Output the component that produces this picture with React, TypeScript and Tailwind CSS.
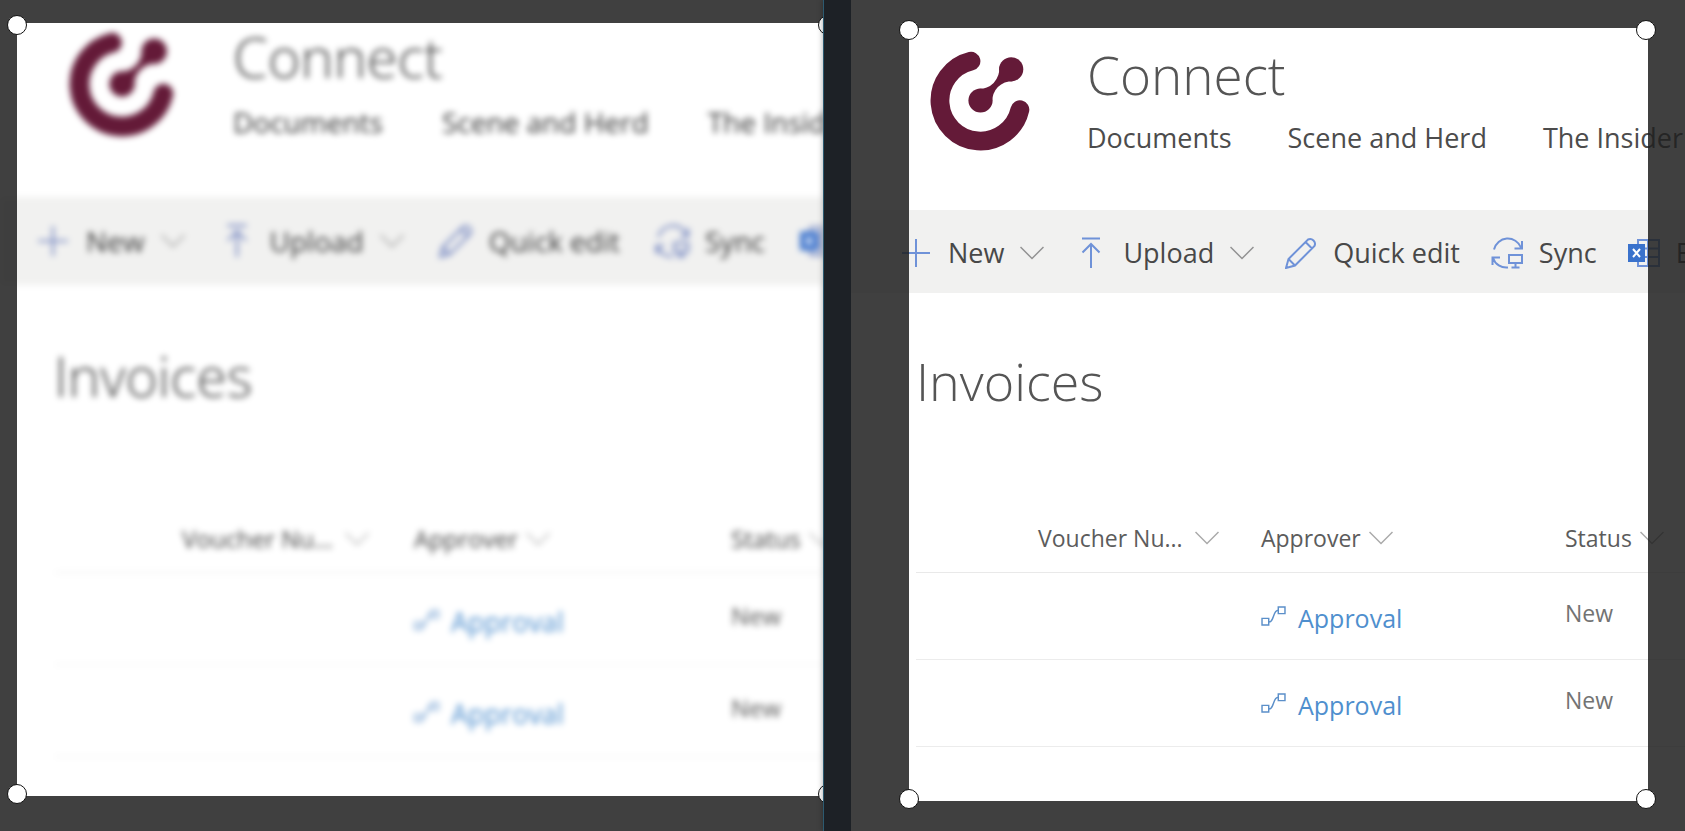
import type { ReactNode } from "react";
import clsx from "clsx";

type Size = "large" | "small";

// The two panes show the same page at slightly different zoom levels.
const sizes = {
    large: {
        page: "blur-[3px]",
        header: "h-[197px] pt-[24px] pl-[69px] gap-[58px]",
        logo: "w-[106px] h-[106px] mt-[7px]",
        title: "text-[56px] text-[#444]",
        nav: "mt-[16px] gap-[59px] text-[28px] text-[#333]",
        bar: "h-[88px] pl-[36px] gap-[35px] text-[28px] text-[#383838]",
        icon: "w-[34px] h-[34px] text-[#6c7fbd]",
        heading: "mt-[59px] ml-[54px] text-[55px] text-[#444]",
        table: "mt-[99px] ml-[55px]",
        cols: ["w-[127px]", "w-[232px]", "w-[317px]"],
        headRow: "h-[65px] text-[24px] text-[#444]",
        row: "h-[92px]",
        approval: "pt-[33px] text-[27px]",
        status: "pt-[27px] text-[24px] text-[#555]",
    },
    small: {
        page: "",
        header: "h-[210px] pt-[43px] pl-[79px] gap-[56px]",
        logo: "w-[101px] h-[101px] mt-[7px]",
        title: "text-[53px] text-[#555]",
        nav: "mt-[13px] gap-[56px] text-[27px] text-[#4c4c4c]",
        bar: "h-[83px] pt-[3px] pl-[49px] gap-[31px] text-[27px] text-[#484848]",
        icon: "w-[32px] h-[32px] text-[#6f92d8]",
        heading: "mt-[56px] ml-[65px] text-[52px] text-[#555]",
        table: "mt-[92px] ml-[65px]",
        cols: ["w-[122px]", "w-[223px]", "w-[304px]"],
        headRow: "h-[67px] text-[23px] text-[#5c5c5c]",
        row: "h-[87px]",
        approval: "pt-[29px] text-[25px]",
        status: "pt-[24px] text-[23px] text-[#737373]",
    },
};

const links = ["Documents", "Scene and Herd", "The Insider"];

const commands: { label: string; menu?: boolean; icon: ReactNode }[] = [
    { label: "New", menu: true, icon: <path d="M16 2v28M2 16h28" /> },
    { label: "Upload", menu: true, icon: <path d="M7 1.500h18M16 31V7M7.500 15.500L16 7l8.500 8.500" /> },
    {
        label: "Quick edit",
        icon: <path d="M1 31l2.500-9L23 2.500a4.900 4.900 0 0 1 6.500 6.500L10 28.500zM20.500 5l6.500 6.500M3.500 22l6.500 6.500" />,
    },
    {
        label: "Sync",
        icon: (
            <>
                <path d="M3 12.500A14.200 14.200 0 0 1 30 10.500M31 4v7.500h-7.500M1.500 28v-7.500h7.500M2 21A14 14 0 0 0 17 30.500" />
                <path d="M18 18h13v8H18zM24.500 26v4M20.500 30.500h8" />
            </>
        ),
    },
    {
        label: "Export to Excel",
        icon: (
            <>
                <path d="M10 8V3h21v26H10v-5M20 3v26M10 11.500h21M10 20h21" />
                <path d="M1 8h15v16H1z" fill="#3a72cc" stroke="#3a72cc" />
                <path d="M5 12l7 8M12 12l-7 8" stroke="#fff" />
            </>
        ),
    },
];

function Logo({ className }: { className: string }) {
    return (
        <svg viewBox="0 0 102 102" className={clsx("shrink-0", className)} fill="#641a38" aria-hidden="true">
            <path
                d="M41.4 11.300A40.900 40.900 0 1 0 90.800 60.300"
                fill="none"
                stroke="#641a38"
                strokeWidth="19"
                strokeLinecap="round"
            />
            <circle cx="51" cy="51" r="12.200" />
            <circle cx="82" cy="19.500" r="12.200" />
            <path
                transform="translate(51 51) rotate(-45.500)"
                d="M6 -10.500Q13 -3 22 -3Q31 -3 38 -10.500L38 10.500Q31 3 22 3Q13 3 6 10.500Z"
            />
        </svg>
    );
}

function Chevron({ className }: { className: string }) {
    return (
        <svg viewBox="0 0 24 14" className={clsx("w-6 h-3.5 shrink-0", className)} fill="none" stroke="currentColor" strokeWidth="1.500" aria-hidden="true">
            <path d="M0.500 1L12 12.500L23.500 1" />
        </svg>
    );
}

function FlowIcon() {
    return (
        <svg viewBox="0 0 26 23" className="w-[25px] h-[22px] shrink-0 mb-1" fill="none" stroke="#5b8fc9" strokeWidth="1.500" aria-hidden="true">
            <path d="M1 14h7v7H1zM18 2h7v7h-7zM8 18C14 18 12 5.500 18 5.500" />
        </svg>
    );
}

function InvoicePage({ size }: { size: Size }) {
    const s = sizes[size];

    return (
        <div className={clsx("h-full bg-white whitespace-nowrap overflow-hidden", s.page)}>
            <header className={clsx("flex", s.header)}>
                <Logo className={s.logo} />
                <div>
                    <h1 className={clsx("font-light leading-[64px]", s.title)}>Connect</h1>
                    <nav className={clsx("flex leading-9", s.nav)}>
                        {links.map((link) => (
                            <a key={link} href="#">{link}</a>
                        ))}
                    </nav>
                </div>
            </header>

            <div className={clsx("flex items-center bg-[#f1f1f0]", s.bar)}>
                {commands.map((command) => {
                    // no room left for the last label on the zoomed-in page
                    const iconOnly = size === "large" && command.label === "Export to Excel";
                    return (
                        <button
                            key={command.label}
                            type="button"
                            aria-label={command.label}
                            className="flex items-center gap-4 shrink-0"
                        >
                            <svg
                                viewBox="0 0 32 32"
                                className={clsx("shrink-0", s.icon)}
                                fill="none"
                                stroke="currentColor"
                                strokeWidth="2"
                                aria-hidden="true"
                            >
                                {command.icon}
                            </svg>
                            {!iconOnly && <span>{command.label}</span>}
                            {command.menu && <Chevron className="text-[#939393]" />}
                        </button>
                    );
                })}
            </div>

            <h2 className={clsx("font-light leading-[64px]", s.heading)}>Invoices</h2>

            <table className={clsx("table-fixed w-full text-left", s.table)}>
                <colgroup>
                    {s.cols.map((col) => (
                        <col key={col} className={col} />
                    ))}
                    <col />
                </colgroup>
                <thead>
                    <tr className={clsx("border-b border-[#e9e9e9] leading-8", s.headRow)}>
                        <td></td>
                        <th scope="col" className="p-0 font-normal">
                            <button type="button" className="flex items-center gap-3">
                                Voucher Nu... <Chevron className="text-[#aaa]" />
                            </button>
                        </th>
                        <th scope="col" className="p-0 font-normal">
                            <button type="button" className="flex items-center gap-2">
                                Approver <Chevron className="text-[#aaa]" />
                            </button>
                        </th>
                        <th scope="col" className="p-0 font-normal">
                            <button type="button" className="flex items-center gap-2">
                                Status <Chevron className="text-[#aaa]" />
                            </button>
                        </th>
                    </tr>
                </thead>
                <tbody>
                    {[1, 2].map((row) => (
                        <tr key={row} className={clsx("border-b border-[#ececec] align-top leading-8", s.row)}>
                            <td></td>
                            <td></td>
                            <td className={s.approval}>
                                <a href="#" className="flex items-center gap-3 text-[#4f8fce]">
                                    <FlowIcon />
                                    Approval
                                </a>
                            </td>
                            <td className={s.status}>New</td>
                        </tr>
                    ))}
                </tbody>
            </table>
        </div>
    );
}

// Crop rectangle: everything outside of it is dimmed by the spread shadow
function CropFrame({ className }: { className: string }) {
    const handle = "absolute size-5 rounded-full bg-white border border-[#111]";

    return (
        <div className={clsx("absolute shadow-[0_0_0_2000px_rgba(30,30,30,0.85)]", className)}>
            <span className={clsx(handle, "-top-2 -left-2.5")} />
            <span className={clsx(handle, "-top-2 -right-2")} />
            <span className={clsx(handle, "-bottom-2 -left-2.5")} />
            <span className={clsx(handle, "-bottom-2 -right-2")} />
        </div>
    );
}

export default function App() {
    return (
        <main className="flex h-screen overflow-hidden bg-[#1d2126] font-['Open_Sans',sans-serif]">
            <section className="relative flex-[823] min-w-0 overflow-hidden bg-white">
                <InvoicePage size="large" />
                <CropFrame className="top-[23px] left-[17px] -right-[7px] bottom-[35px]" />
            </section>
            <div className="relative w-7 shrink-0 border-l border-[#2c5a70] bg-[#1d2126] shadow-[0_0_6px_rgba(0,0,0,0.35)]" />
            <section className="relative flex-[834] min-w-0 overflow-hidden bg-white">
                <InvoicePage size="small" />
                <CropFrame className="top-[28px] left-[58px] right-[37px] bottom-[30px]" />
            </section>
        </main>
    );
}
